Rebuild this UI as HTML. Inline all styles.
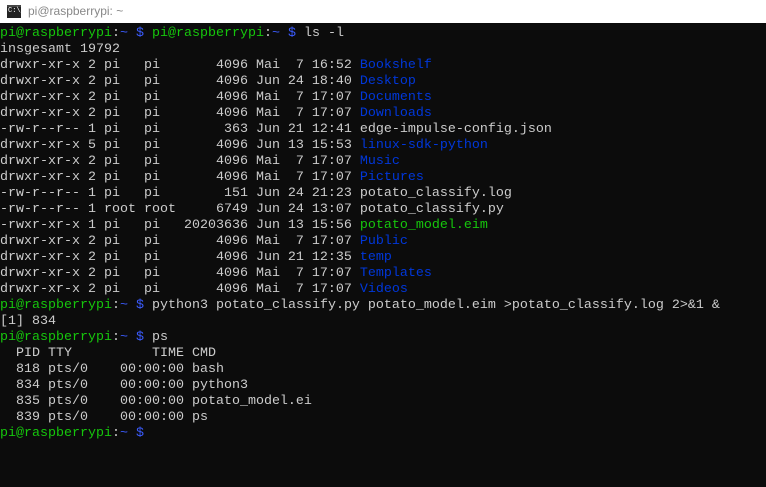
<!DOCTYPE html>
<html><head><style>
body{margin:0;width:766px;height:487px;background:#0c0c0c;overflow:hidden}
.t{height:23px;background:#fff;position:relative;font:12px "Liberation Sans",sans-serif;color:#888}
.t span{position:absolute;left:28px;top:4px}
.ic{position:absolute;left:7px;top:5px;width:14px;height:11px;background:#222;border-top:2px solid #444}
.ic:after{content:"C:\\_";position:absolute;left:1px;top:0px;color:#fff;font:7px "Liberation Mono",monospace}
pre{margin:0;padding:0;position:absolute;top:26px;left:0;font:13.33px/16px "Liberation Mono",monospace;color:#ccc}
.g{color:#16c60c}.b{color:#3b5cff}.d{color:#0037da}.x{color:#16c60c}
</style></head><body>
<div class="t"><div class="ic"></div><span>pi@raspberrypi: ~</span></div>
<pre><span class="g">pi@raspberrypi</span>:<span class="b">~ $</span> <span class="g">pi@raspberrypi</span>:<span class="b">~ $</span> ls -l
insgesamt 19792
drwxr-xr-x 2 pi   pi       4096 Mai  7 16:52 <span class="d">Bookshelf</span>
drwxr-xr-x 2 pi   pi       4096 Jun 24 18:40 <span class="d">Desktop</span>
drwxr-xr-x 2 pi   pi       4096 Mai  7 17:07 <span class="d">Documents</span>
drwxr-xr-x 2 pi   pi       4096 Mai  7 17:07 <span class="d">Downloads</span>
-rw-r--r-- 1 pi   pi        363 Jun 21 12:41 edge-impulse-config.json
drwxr-xr-x 5 pi   pi       4096 Jun 13 15:53 <span class="d">linux-sdk-python</span>
drwxr-xr-x 2 pi   pi       4096 Mai  7 17:07 <span class="d">Music</span>
drwxr-xr-x 2 pi   pi       4096 Mai  7 17:07 <span class="d">Pictures</span>
-rw-r--r-- 1 pi   pi        151 Jun 24 21:23 potato_classify.log
-rw-r--r-- 1 root root     6749 Jun 24 13:07 potato_classify.py
-rwxr-xr-x 1 pi   pi   20203636 Jun 13 15:56 <span class="x">potato_model.eim</span>
drwxr-xr-x 2 pi   pi       4096 Mai  7 17:07 <span class="d">Public</span>
drwxr-xr-x 2 pi   pi       4096 Jun 21 12:35 <span class="d">temp</span>
drwxr-xr-x 2 pi   pi       4096 Mai  7 17:07 <span class="d">Templates</span>
drwxr-xr-x 2 pi   pi       4096 Mai  7 17:07 <span class="d">Videos</span>
<span class="g">pi@raspberrypi</span>:<span class="b">~ $</span> python3 potato_classify.py potato_model.eim &gt;potato_classify.log 2&gt;&amp;1 &amp;
[1] 834
<span class="g">pi@raspberrypi</span>:<span class="b">~ $</span> ps
  PID TTY          TIME CMD
  818 pts/0    00:00:00 bash
  834 pts/0    00:00:00 python3
  835 pts/0    00:00:00 potato_model.ei
  839 pts/0    00:00:00 ps
<span class="g">pi@raspberrypi</span>:<span class="b">~ $</span></pre>
</body></html>
